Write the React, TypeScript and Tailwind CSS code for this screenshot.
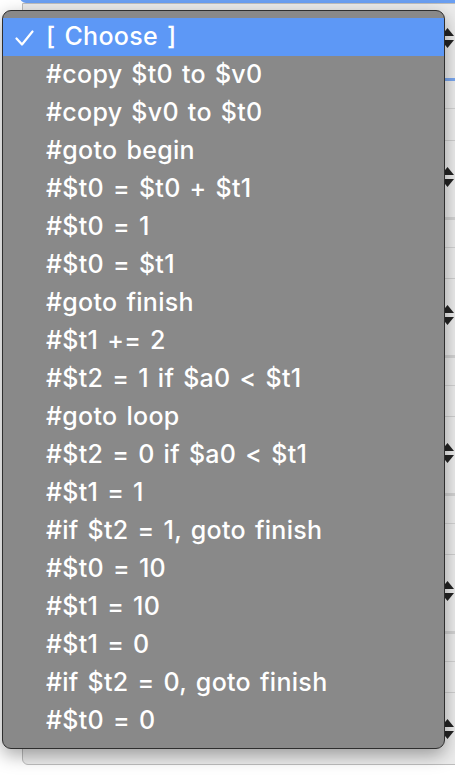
import React from "react";

const OPTIONS = [
  "[ Choose ]",
  "#copy $t0 to $v0",
  "#copy $v0 to $t0",
  "#goto begin",
  "#$t0 = $t0 + $t1",
  "#$t0 = 1",
  "#$t0 = $t1",
  "#goto finish",
  "#$t1 += 2",
  "#$t2 = 1 if $a0 < $t1",
  "#goto loop",
  "#$t2 = 0 if $a0 < $t1",
  "#$t1 = 1",
  "#if $t2 = 1, goto finish",
  "#$t0 = 10",
  "#$t1 = 10",
  "#$t1 = 0",
  "#if $t2 = 0, goto finish",
  "#$t0 = 0",
];

function UpDown() {
  return (
    <svg width="13" height="22" viewBox="0 0 13 22">
      <path d="M0 9 L6.5 1 L13 9 Z" fill="#232323" />
      <path d="M0 13 L6.5 21 L13 13 Z" fill="#232323" />
    </svg>
  );
}

function Block({ first }: { first?: boolean }) {
  return (
    <div
      className={
        "h-[138px] flex flex-col " +
        (first ? "" : "border-t border-[#cfcfcf]")
      }
    >
      <div className="h-[76px] flex items-center justify-end pr-[7px] pb-[4px]">
        <UpDown />
      </div>
      <div
        className={
          "h-[30px] border-t-[3px] " +
          (first ? "border-[#7aa7ef]" : "border-[#d2d2d2]")
        }
      />
      <div className="flex-1 border-t border-[#d2d2d2]" />
    </div>
  );
}

export default function App() {
  return (
    <div
      className="relative w-[455px] h-[784px] overflow-hidden bg-white"
      style={{ fontFamily: "Inter, 'Noto Sans', sans-serif" }}
    >
      {/* page behind the popup */}
      <div className="ml-[20px] w-[442px] h-[40px] mt-[-37px] rounded-md border-[3px] border-[#6a9ff2] bg-white" />
      <div className="ml-[22px] w-[440px] h-[762px] rounded-b-md border border-[#bdbdbd] bg-[#ececec] overflow-hidden flex flex-col">
        <div className="mt-[-2px]">
          <Block first />
          <Block />
          <Block />
          <Block />
          <Block />
          <Block />
        </div>
      </div>

      {/* popup menu */}
      <div className="absolute left-[2px] top-[10px] w-[443px] h-[739px] rounded-[9px] border border-[#2e2e2e] bg-[#898989] py-[7px] shadow-[0_6px_18px_rgba(0,0,0,0.35)] overflow-hidden">
        {OPTIONS.map((opt, i) => (
          <div
            key={opt}
            className={
              "relative h-[38px] flex items-center pl-[43px] text-white text-[25px] font-medium tracking-[0.3px] [word-spacing:2px] " +
              (i === 0 ? "bg-[#5d98f6]" : "")
            }
          >
            {i === 0 && (
              <svg
                className="absolute left-[12px] top-[12px]"
                width="19"
                height="16"
                viewBox="0 0 19 16"
              >
                <path
                  d="M1.5 8.5 L7 14.5 L17.5 1.5"
                  fill="none"
                  stroke="white"
                  strokeWidth="2.2"
                  strokeLinecap="round"
                  strokeLinejoin="round"
                />
              </svg>
            )}
            <span>{opt}</span>
          </div>
        ))}
      </div>
    </div>
  );
}
